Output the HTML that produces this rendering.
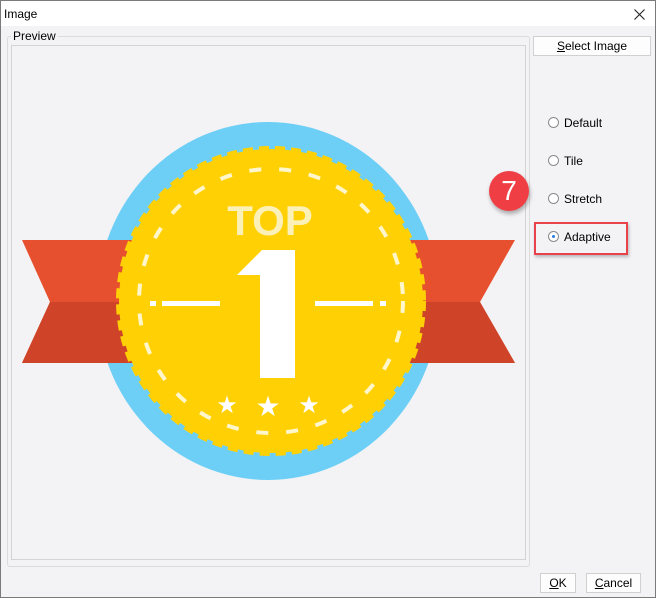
<!DOCTYPE html>
<html><head><style>
body{margin:0;width:656px;height:598px;background:#f3f3f6;font-family:"Liberation Sans",sans-serif;font-size:12px;color:#000;position:relative;overflow:hidden}
.win{position:absolute;left:0;top:0;width:654px;height:596px;border:1px solid #7a7a7a;background:#f3f3f6}
.title{position:absolute;left:0;top:0;width:654px;height:25px;background:#fff}
.title span{position:absolute;left:3px;top:6px}
.grp{position:absolute;left:7px;top:36px;width:521px;height:529px;border:1px solid #dcdcdc;border-radius:3px}
.leg{position:absolute;left:11px;top:29px;background:#f3f3f6;padding:0 2px}
.frame{position:absolute;left:11px;top:45px;width:513px;height:513px;border:1px solid #d3d3d3}
.btn{position:absolute;background:#fdfdfd;border:1px solid #d0d0d0;text-align:center;line-height:18px}
.rad{position:absolute;left:548px}
.rad i{position:absolute;left:0;top:1px;width:11px;height:11px;border:1px solid #8a8a8a;border-radius:50%;background:#fff;box-sizing:border-box}
.rad span{position:absolute;left:16px;top:0;white-space:nowrap}
</style></head><body>
<div class="win">
<div class="title"><span>Image</span>
<svg style="position:absolute;left:633px;top:8px" width="11" height="11"><path d="M0.5 0.5L10.5 10.5M10.5 0.5L0.5 10.5" stroke="#222" stroke-width="1.1"/></svg></div>
</div>
<div class="grp"></div>
<div class="leg">Preview</div>
<div class="frame"></div>
<svg style="position:absolute;left:0;top:0" width="656" height="598">
<ellipse cx="268" cy="301" rx="171" ry="179" fill="#6dcff5"/>
<polygon points="22,240 150,240 150,363 22,363 50,302" fill="#e7502f"/>
<polygon points="22,302 150,302 150,363 22,363 50,302" fill="#cf4428"/>
<polygon points="515,240 390,240 390,363 515,363 480,302" fill="#e7502f"/>
<polygon points="480,302 390,302 390,363 515,363" fill="#cf4428"/>
<circle cx="271" cy="301" r="152" fill="#ffd105" stroke="#ffd105" stroke-width="6" stroke-dasharray="10 6"/>
<circle cx="271" cy="301" r="132" fill="none" stroke="#fff6cc" stroke-width="4" stroke-dasharray="12 18"/>
<text x="270" y="235" text-anchor="middle" font-family="Liberation Sans" font-weight="bold" font-size="42" fill="#fbf0b8">TOP</text>
<polygon points="237,275 262,250 295,250 295,378 260,378 260,275" fill="#fff"/>
<rect x="162" y="301" width="58" height="5" fill="#fff"/>
<rect x="150" y="301" width="6" height="5" fill="#fff"/>
<rect x="315" y="301" width="58" height="5" fill="#fff"/>
<rect x="380" y="301" width="6" height="5" fill="#fff"/>
<text x="227" y="413" text-anchor="middle" font-size="24" fill="#fff">★</text>
<text x="268" y="416" text-anchor="middle" font-size="28" fill="#fff">★</text>
<text x="309" y="413" text-anchor="middle" font-size="24" fill="#fff">★</text>
</svg>
<div class="btn" style="left:533px;top:36px;width:116px;height:18px"><u>S</u>elect Image</div>
<div class="rad" style="top:116px"><i></i><span>Default</span></div>
<div class="rad" style="top:154px"><i></i><span>Tile</span></div>
<div class="rad" style="top:192px"><i></i><span>Stretch</span></div>
<div class="rad" style="top:230px"><i><b style="position:absolute;left:3px;top:3px;width:3px;height:3px;border-radius:50%;background:#2a7de1"></b></i><span>Adaptive</span></div>
<div style="position:absolute;left:534px;top:222px;width:90px;height:29px;border:2px solid #e8424a;box-shadow:1px 2px 3px rgba(0,0,0,.25)"></div>
<div style="position:absolute;left:489px;top:171px;width:40px;height:40px;border-radius:50%;background:#ef3f45;box-shadow:1px 3px 4px rgba(0,0,0,.3);color:#fff;font-size:28px;text-align:center;line-height:40px">7</div>
<div class="btn" style="left:540px;top:573px;width:34px;height:18px"><u>O</u>K</div>
<div class="btn" style="left:586px;top:573px;width:53px;height:18px"><u>C</u>ancel</div>
</body></html>
